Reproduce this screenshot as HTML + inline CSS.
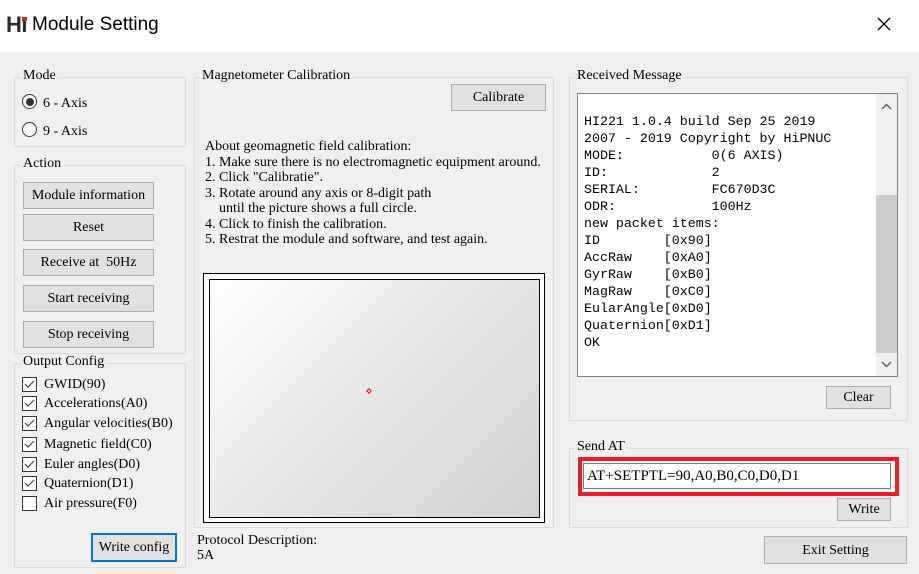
<!DOCTYPE html>
<html><head><meta charset="utf-8"><style>
*{margin:0;padding:0;box-sizing:border-box}
body{width:919px;height:574px;background:#f0f0f0;position:relative;overflow:hidden;font-family:"Liberation Serif",serif;font-size:14px;color:#000}
.a{position:absolute}
.title{left:0;top:0;width:919px;height:52px;background:#fff}
.g{position:absolute;border:1px solid #dcdcdc}
.lg{position:absolute;background:#f0f0f0;padding:0 2px;font-size:14px;line-height:16px;white-space:nowrap}
.btn{position:absolute;background:#e1e1e1;border:1px solid #adadad;text-align:center;font-size:14px;white-space:nowrap}
.t{position:absolute;white-space:nowrap;line-height:16px}
.mono{font-family:"Liberation Mono",monospace;font-size:13.3px;line-height:17px;white-space:pre}
</style></head><body>
<div class="a title"></div>
<div class="t" style="left:6px;top:12px;font-family:'Liberation Sans',sans-serif;font-weight:bold;font-size:22px;line-height:26px;color:#2a2a2a;letter-spacing:-0.5px">H<span style="position:relative">ı<span style="position:absolute;left:1px;top:5px;width:5px;height:4px;background:#e02020"></span></span></div>
<div class="t" style="left:32px;top:13px;font-family:'Liberation Sans',sans-serif;font-size:19px;line-height:24px">Module Setting</div>
<svg class="a" style="left:877px;top:17px" width="14" height="14"><path d="M1 1L13 13M13 1L1 13" stroke="#000" stroke-width="1.3"/></svg>

<!-- Mode -->
<div class="g" style="left:14px;top:77px;width:172px;height:70px"></div>
<div class="lg" style="left:21px;top:68px">Mode</div>
<div class="a" style="left:22px;top:94px;width:15px;height:15px;border:1px solid #333;border-radius:50%;background:#fff"><div class="a" style="left:2.5px;top:2.5px;width:8px;height:8px;border-radius:50%;background:#333"></div></div>
<div class="t" style="left:43px;top:96px">6 - Axis</div>
<div class="a" style="left:22px;top:122px;width:15px;height:15px;border:1px solid #333;border-radius:50%;background:#fff"></div>
<div class="t" style="left:43px;top:124px">9 - Axis</div>

<!-- Action -->
<div class="g" style="left:14px;top:165px;width:172px;height:189px"></div>
<div class="lg" style="left:21px;top:156px">Action</div>
<div class="btn" style="left:23px;top:182px;width:131px;height:27px;line-height:26px">Module information</div>
<div class="btn" style="left:23px;top:214px;width:131px;height:27px;line-height:26px">Reset</div>
<div class="btn" style="left:23px;top:249px;width:131px;height:27px;line-height:26px">Receive at &nbsp;50Hz</div>
<div class="btn" style="left:23px;top:285px;width:131px;height:27px;line-height:26px">Start receiving</div>
<div class="btn" style="left:23px;top:321px;width:131px;height:27px;line-height:26px">Stop receiving</div>

<!-- Output Config -->
<div class="g" style="left:14px;top:363px;width:172px;height:205px"></div>
<div class="lg" style="left:21px;top:354px">Output Config</div>
<svg class="a" style="left:0;top:0" width="200" height="574">
<g fill="#fff" stroke="#333"><rect x="22.5" y="377.5" width="14" height="14"/><rect x="22.5" y="396.5" width="14" height="14"/><rect x="22.5" y="416.5" width="14" height="14"/><rect x="22.5" y="437.5" width="14" height="14"/><rect x="22.5" y="457.5" width="14" height="14"/><rect x="22.5" y="476.5" width="14" height="14"/><rect x="22.5" y="496.5" width="14" height="14"/></g>
<g fill="none" stroke="#444" stroke-width="1.2"><path d="M25 384l3 3 6-6"/><path d="M25 403l3 3 6-6"/><path d="M25 423l3 3 6-6"/><path d="M25 444l3 3 6-6"/><path d="M25 464l3 3 6-6"/><path d="M25 483l3 3 6-6"/></g>
</svg>
<div class="t" style="left:44px;top:377px">GWID(90)</div>
<div class="t" style="left:44px;top:396px">Accelerations(A0)</div>
<div class="t" style="left:44px;top:416px">Angular velocities(B0)</div>
<div class="t" style="left:44px;top:437px">Magnetic field(C0)</div>
<div class="t" style="left:44px;top:457px">Euler angles(D0)</div>
<div class="t" style="left:44px;top:476px">Quaternion(D1)</div>
<div class="t" style="left:44px;top:496px">Air pressure(F0)</div>
<div class="btn" style="left:91px;top:533px;width:86px;height:29px;line-height:26px;border:2px solid #0078d7">Write config</div>

<!-- Magnetometer -->
<div class="g" style="left:194px;top:77px;width:360px;height:451px"></div>
<div class="lg" style="left:200px;top:68px">Magnetometer Calibration</div>
<div class="btn" style="left:451px;top:84px;width:95px;height:27px;line-height:26px">Calibrate</div>
<div class="t" style="left:205px;top:139px;line-height:15.5px">About geomagnetic field calibration:<br>1. Make sure there is no electromagnetic equipment around.<br>2. Click "Calibratie".<br>3. Rotate around any axis or 8-digit path<br>&nbsp;&nbsp;&nbsp;&nbsp;until the picture shows a full circle.<br>4. Click to finish the calibration.<br>5. Restrat the module and software, and test again.</div>
<div class="a" style="left:203px;top:273px;width:342px;height:250px;border:1px solid #000;background:#fff"></div>
<div class="a" style="left:209px;top:279px;width:331px;height:239px;border:1px solid #000;background:linear-gradient(135deg,#fff 0%,#e6e6e6 50%,#d2d2d2 100%)"></div>
<div class="a" style="left:367px;top:389px;width:4px;height:4px;border:1px solid #e00;transform:rotate(45deg)"></div>
<div class="t" style="left:197px;top:533px;line-height:15px">Protocol Description:<br>5A</div>

<!-- Received -->
<div class="g" style="left:569px;top:77px;width:339px;height:344px"></div>
<div class="lg" style="left:575px;top:68px">Received Message</div>
<div class="a" style="left:577px;top:93px;width:321px;height:284px;border:1px solid #828282;background:#fff"></div>
<div class="a" style="left:876px;top:94px;width:21px;height:282px;background:#f0f0f0"></div>
<div class="a" style="left:876px;top:195px;width:21px;height:158px;background:#cdcdcd"></div>
<svg class="a" style="left:876px;top:96px" width="21" height="280"><path d="M6 13l4.5-4.5 4.5 4.5" fill="none" stroke="#606060" stroke-width="1.5"/><path d="M6 266l4.5 4.5 4.5-4.5" fill="none" stroke="#606060" stroke-width="1.5"/></svg>
<div class="a mono" style="left:584px;top:113px">HI221 1.0.4 build Sep 25 2019
2007 - 2019 Copyright by HiPNUC
MODE:           0(6 AXIS)
ID:             2
SERIAL:         FC670D3C
ODR:            100Hz
new packet items:
ID        [0x90]
AccRaw    [0xA0]
GyrRaw    [0xB0]
MagRaw    [0xC0]
EularAngle[0xD0]
Quaternion[0xD1]
OK</div>
<div class="btn" style="left:826px;top:386px;width:65px;height:23px;line-height:22px">Clear</div>

<!-- Send AT -->
<div class="g" style="left:569px;top:448px;width:339px;height:80px"></div>
<div class="lg" style="left:575px;top:439px">Send AT</div>
<div class="a" style="left:578px;top:457px;width:321px;height:39px;border:4px solid #ed1c24;background:#fff"></div>
<div class="a" style="left:583px;top:463px;width:308px;height:26px;border:1px solid #7a7a7a;background:#fff;padding-left:3px;line-height:24px;font-size:15px">AT+SETPTL=90,A0,B0,C0,D0,D1</div>
<div class="btn" style="left:837px;top:498px;width:54px;height:23px;line-height:22px">Write</div>

<div class="btn" style="left:764px;top:536px;width:143px;height:28px;line-height:27px">Exit Setting</div>
</body></html>
